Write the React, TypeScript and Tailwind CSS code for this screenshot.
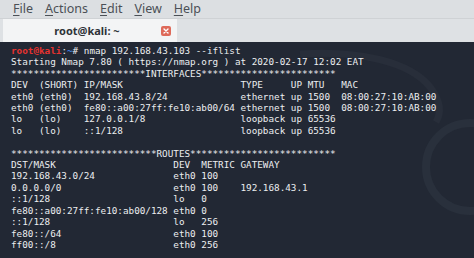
import React from "react";

const mono = { fontFamily: '"DejaVu Sans Mono", "Liberation Mono", monospace' };

const row = (cells: [string, number][]) =>
  cells.map(([text, width]) => (width ? text.padEnd(width) : text)).join("");

const stars = (label: string) => "*".repeat(label === "ROUTES" ? 26 : 24) + label + "*".repeat(label === "ROUTES" ? 26 : 24);

const lines: string[] = [
  "Starting Nmap 7.80 ( https://nmap.org ) at 2020-02-17 12:02 EAT",
  stars("INTERFACES"),
  row([["DEV", 5], ["(SHORT)", 8], ["IP/MASK", 28], ["TYPE", 9], ["UP", 3], ["MTU", 6], ["MAC", 0]]),
  row([["eth0", 5], ["(eth0)", 8], ["192.168.43.8/24", 28], ["ethernet", 9], ["up", 3], ["1500", 6], ["08:00:27:10:AB:00", 0]]),
  row([["eth0", 5], ["(eth0)", 8], ["fe80::a00:27ff:fe10:ab00/64", 28], ["ethernet", 9], ["up", 3], ["1500", 6], ["08:00:27:10:AB:00", 0]]),
  row([["lo", 5], ["(lo)", 8], ["127.0.0.1/8", 28], ["loopback", 9], ["up", 3], ["65536", 0]]),
  row([["lo", 5], ["(lo)", 8], ["::1/128", 28], ["loopback", 9], ["up", 3], ["65536", 0]]),
  "",
  stars("ROUTES"),
  row([["DST/MASK", 29], ["DEV", 5], ["METRIC", 7], ["GATEWAY", 0]]),
  row([["192.168.43.0/24", 29], ["eth0", 5], ["100", 0]]),
  row([["0.0.0.0/0", 29], ["eth0", 5], ["100", 7], ["192.168.43.1", 0]]),
  row([["::1/128", 29], ["lo", 5], ["0", 0]]),
  row([["fe80::a00:27ff:fe10:ab00/128", 29], ["eth0", 5], ["0", 0]]),
  row([["::1/128", 29], ["lo", 5], ["256", 0]]),
  row([["fe80::/64", 29], ["eth0", 5], ["100", 0]]),
  row([["ff00::/8", 29], ["eth0", 5], ["256", 0]]),
];

const menu = ["File", "Actions", "Edit", "View", "Help"];

export default function App() {
  return (
    <div className="w-[474px] h-[258px] overflow-hidden flex flex-col bg-[#222834]">
      {/* menu bar */}
      <div
        className="h-[19px] shrink-0 bg-[#dcdfe2] border-b border-[#cfd2d5] flex items-center gap-[12px] pl-[13px] text-[12.5px] text-[#4b5056]"
        style={{ fontFamily: '"Noto Sans", "Open Sans", sans-serif' }}
      >
        {menu.map((m) => (
          <span key={m} className="leading-none">
            <span className="underline underline-offset-2">{m[0]}</span>
            {m.slice(1)}
          </span>
        ))}
      </div>

      {/* tab bar */}
      <div className="h-[23px] shrink-0 bg-[#dee1e4] flex pl-[3px]">
        <div className="w-[174px] bg-[#f3f4f5] flex items-center relative">
          <span
            className="w-full text-center pr-[6px] pt-[1px] text-[11px] font-bold text-[#2e3338]"
            style={{ fontFamily: '"Noto Sans", "Open Sans", sans-serif' }}
          >
            root@kali: ~
          </span>
          <span className="absolute left-[158px] top-[7px] w-[10px] h-[10px] rounded-[2px] bg-[#de6a5a] flex items-center justify-center">
            <svg width="6" height="6" viewBox="0 0 6 6">
              <path d="M1 1L5 5M5 1L1 5" stroke="#fff" strokeWidth="1.4" strokeLinecap="round" />
            </svg>
          </span>
        </div>
      </div>

      {/* terminal */}
      <div className="relative flex-1 pt-[3px] pl-[11px] text-[9.3px] leading-[11.4px] text-[#eceef0] whitespace-pre" style={mono}>
        <svg className="absolute left-0 top-0 pointer-events-none" width="474" height="216" viewBox="0 0 474 216">
          <path d="M300 12 C360 8 410 20 430 45 C440 58 442 70 436 80" fill="none" stroke="#282e3a" strokeWidth="7" />
          <circle cx="470" cy="125" r="44" fill="none" stroke="#29303c" strokeWidth="8" />
        </svg>
        <div className="relative">
          <div>
            <span className="text-[#e5322f] font-bold">root@kali</span>
            <span>:</span>
            <span className="text-[#3f7fe0] font-bold">~</span>
            <span># nmap 192.168.43.103 --iflist</span>
          </div>
          {lines.map((l, i) => (
            <div key={i}>{l || " "}</div>
          ))}
        </div>
      </div>
    </div>
  );
}
